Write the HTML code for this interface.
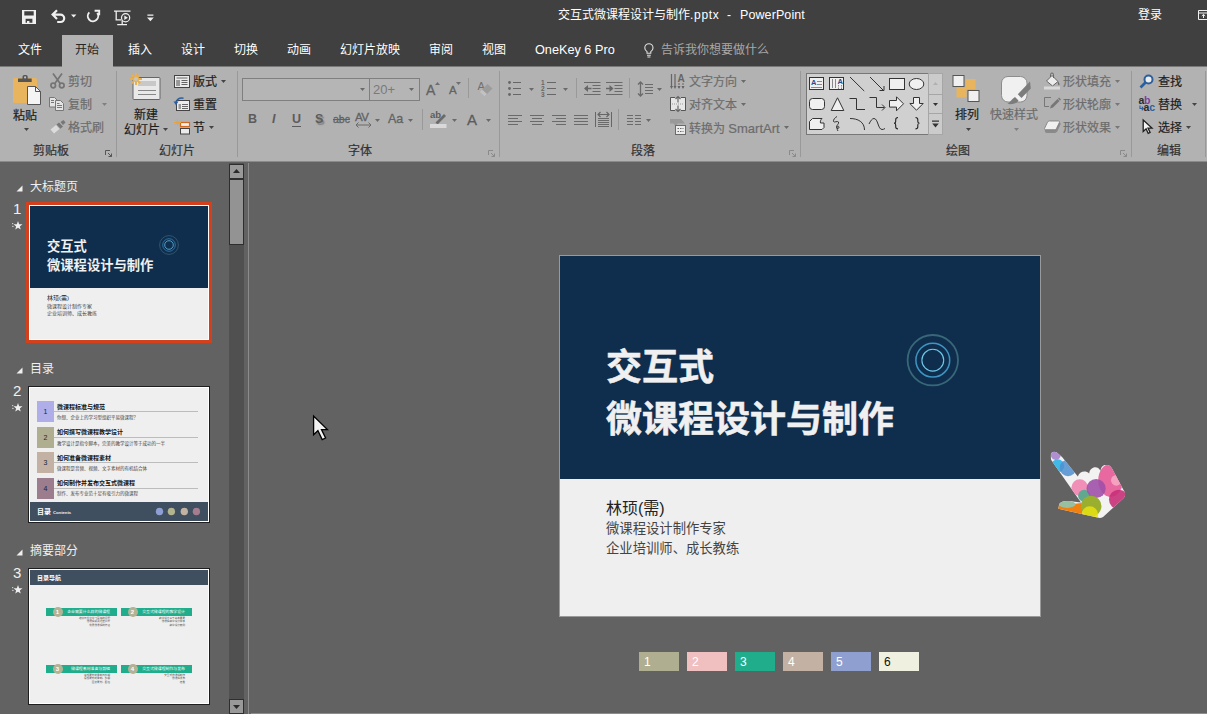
<!DOCTYPE html>
<html lang="zh-CN"><head><meta charset="utf-8"><title>交互式微课程设计与制作.pptx - PowerPoint</title>
<style>
*{box-sizing:border-box;margin:0;padding:0}
html,body{width:1207px;height:714px;overflow:hidden;background:#626262}
body{position:relative;font-family:"Liberation Sans","Noto Sans CJK SC",sans-serif;font-size:12px;color:#262626;line-height:1}
.a{position:absolute;white-space:nowrap}
#top{left:0;top:0;width:1207px;height:66px;background:#404040}
#ribbon{left:0;top:66px;width:1207px;height:95px;background:#b2b2b2}
#rshadow{left:0;top:161px;width:1207px;height:1px;background:#8a8a8a}
.tab{color:#fff;font-size:12px;top:44px}
.t{font-size:12px;color:#1e1e1e;-webkit-text-stroke:.2px}
.g{color:#6c6c6c}
.glabel{top:145px;color:#333}
.sep{width:1px;background:#999;top:71px;height:86px}
.sec{color:#f0f0f0;font-size:12px}
.num{color:#f0f0f0;font-size:15px}
.thumb{background:#efefef;border:1px solid #1e1e1e;box-shadow:inset 0 0 0 1px #fff}
svg{position:absolute;overflow:visible}
.nb{top:652px;width:40px;height:19px;color:#fff;font-size:12px;padding:4px 0 0 5px}
.sq{left:8px;width:17px;height:21px;font-size:7px;color:#223;text-align:center;line-height:21px}
.ln{left:25px;width:144px;height:1px;background:#bcbcbc}
.tt{left:28px;font-size:6px;font-weight:bold;color:#111}
.ts{left:28px;font-size:4.500px;color:#444}
.gb{width:71px;height:8px;background:#20ad8c}
.gc{width:10px;height:10px;border-radius:50%;background:#b3b295;color:#fff;font-size:6px;font-weight:bold;text-align:center;line-height:10px}
.gt{font-size:3.900px;color:#fff}
.gs{font-size:2.600px;color:#555;text-align:right;line-height:3.300px}
</style></head><body>
<div id="top" class="a"></div>
<div id="ribbon" class="a"></div>
<div id="rshadow" class="a"></div>
<div class="a" style="left:0;top:66px;width:1207px;height:1px;background:#797979"></div><div class="a" style="left:62px;top:66px;width:51px;height:1px;background:#b2b2b2"></div>
<!-- TITLEBAR -->
<svg style="left:22px;top:10px" width="14" height="14" viewBox="0 0 14 14"><path fill="#f0f0f0" fill-rule="evenodd" d="M0 0h14v14H0zM2.3 1.3v4.2h9.4V1.3zM3.6 8.8v4h6.8v-4zM5 11h2.4v1.8H5z"/></svg>
<svg style="left:50px;top:9px" width="28" height="15" viewBox="0 0 28 15"><path fill="none" stroke="#f0f0f0" stroke-width="2.200" stroke-linejoin="miter" d="M7 1.200 2.600 5.600 7 10M2.600 5.600H10.500a3.700 3.700 0 0 1 0 7.400H7.200"/><path fill="#f0f0f0" d="M21 5.5h5.4L23.7 8.6z"/></svg>
<svg style="left:86px;top:9px" width="15" height="15" viewBox="0 0 15 15"><path fill="none" stroke="#f0f0f0" stroke-width="1.900" d="M3.300 3.400A5.200 5.200 0 1 0 11.200 4M8.600 1.700H13.200V6.300"/></svg>
<svg style="left:114px;top:10px" width="18" height="17" viewBox="0 0 18 17"><path fill="none" stroke="#f0f0f0" stroke-width="1.3" d="M0 1.2h16.5M2.2 1.5v8.3H7M8.2 10v4.6M3.2 14.7h9.8"/><circle cx="11.6" cy="7.8" r="4.1" fill="#404040" stroke="#f0f0f0" stroke-width="1.2"/><path fill="#f0f0f0" d="M10.3 5.6l3.6 2.2-3.6 2.2z"/></svg>
<svg style="left:147px;top:14px" width="7" height="8" viewBox="0 0 7 8"><path fill="#f0f0f0" d="M0.4 0.6h6v1.2h-6zM0 3.4h6.8L3.4 7.2z"/></svg>
<div class="a" style="left:558px;top:9px;color:#fff;font-size:12px">交互式微课程设计与制作<span style="letter-spacing:.7px">.pptx</span></div>
<div class="a" style="left:727px;top:9px;color:#fff;font-size:12px">-</div>
<div class="a" style="left:740px;top:9px;color:#fff;font-size:12.5px;letter-spacing:.1px">PowerPoint</div>
<div class="a" style="left:1138px;top:9px;color:#fff;font-size:12px">登录</div>
<svg style="left:1198px;top:10px" width="9" height="10" viewBox="0 0 9 10"><path fill="none" stroke="#f0f0f0" stroke-width="1" d="M9 .5H.5v9H9M.5 3H9M5.5 8V4.5M3.8 6 5.5 4.4 7.2 6"/></svg>
<!-- TABS -->
<div class="a" style="left:62px;top:35px;width:51px;height:31px;background:#b2b2b2"></div>
<div class="a tab" style="left:18px">文件</div>
<div class="a tab" style="left:75px;color:#262626">开始</div>
<div class="a tab" style="left:128px">插入</div>
<div class="a tab" style="left:181px">设计</div>
<div class="a tab" style="left:234px">切换</div>
<div class="a tab" style="left:287px">动画</div>
<div class="a tab" style="left:340px">幻灯片放映</div>
<div class="a tab" style="left:429px">审阅</div>
<div class="a tab" style="left:482px">视图</div>
<div class="a tab" style="left:535px;font-size:12.700px">OneKey 6 Pro</div>
<svg style="left:644px;top:43px" width="10" height="15" viewBox="0 0 10 15"><path fill="none" stroke="#e0e0e0" stroke-width="1.1" d="M3 10.2V8.6C1.6 7.6.8 6.4.8 4.9a4.1 4.1 0 0 1 8.2 0c0 1.500-.8 2.700-2.200 3.700v1.600zM3 12.200h3.800M3.400 14h3"/></svg>
<div class="a tab" style="left:661px;color:#a8a8a8">告诉我你想要做什么</div>
<!-- clipboard -->
<svg style="left:13px;top:74px" width="29" height="32" viewBox="0 0 29 32"><rect x="0" y="4" width="24" height="25" rx="1.500" fill="#e8b45e"/><path fill="#555" d="M5 4.500h4.500V2.800a1.800 1.800 0 0 1 1.800-1.800h1.600a1.800 1.800 0 0 1 1.800 1.800V4.500h4v3.500H5z"/><circle cx="12.100" cy="3.400" r="1.100" fill="#c0c0c0"/><path fill="#f4f4f4" stroke="#555" stroke-width="1" d="M14.500 12.500h8l5 5v13h-13z"/><path fill="none" stroke="#555" stroke-width="1" d="M22.500 12.500v5h5"/></svg>
<div class="a t" style="left:13px;top:109.600px">粘贴</div>
<svg style="left:24px;top:128px" width="5" height="3"><path fill="#444" d="M0 0h5L2.500 3z"/></svg>
<svg style="left:50px;top:73px" width="15" height="16" viewBox="0 0 15 16"><path fill="none" stroke="#747474" stroke-width="1.700" d="M3 0.500 10.500 11M12 0.500 4.500 11"/><circle cx="3.200" cy="12.500" r="2.300" fill="none" stroke="#747474" stroke-width="1.700"/><circle cx="11.800" cy="12.500" r="2.300" fill="none" stroke="#747474" stroke-width="1.700"/></svg>
<div class="a t g" style="left:68px;top:76px">剪切</div>
<svg style="left:49px;top:97px" width="16" height="14" viewBox="0 0 16 14"><path fill="#e4e4e4" stroke="#777" stroke-width="1" d="M0.500 0.500h5l2.500 2.500v7h-7.500z"/><path fill="#e4e4e4" stroke="#777" stroke-width="1" d="M6.500 3.500h5l3 3v7h-8z"/><path stroke="#777" stroke-width="1" d="M2 3.500h3M2 5.500h3M8 8.500h5M8 10.500h5M8 6.500h2.500"/></svg>
<div class="a t g" style="left:68px;top:99px">复制</div>
<svg style="left:102px;top:103px" width="5" height="3"><path fill="#808080" d="M0 0h5L2.500 3z"/></svg>
<svg style="left:50px;top:120px" width="16" height="14" viewBox="0 0 16 14"><path fill="#dcdcdc" d="M0.500 9.500 6 5l3.500 4L4 13.500z"/><path fill="#777" d="M6.500 4.500 9 2.500l4 4-2.500 2.200z"/><path fill="#777" d="M10.500 2 13.500 0 15.500 2.500 13 5z"/></svg>
<div class="a t g" style="left:68px;top:122px">格式刷</div>
<div class="a t glabel" style="left:33px">剪贴板</div>
<svg class="lnch" style="left:105px;top:150px" width="7" height="7" viewBox="0 0 7 7"><path fill="none" stroke="#555" stroke-width="1" d="M0.500 5V0.500H5M3 3 6.500 6.500M6.500 3.500v3h-3"/></svg>
<div class="a sep" style="left:116px"></div>
<!-- slides -->
<svg style="left:129px;top:72px" width="32" height="29" viewBox="0 0 32 29"><rect x="4" y="5.500" width="27" height="22" rx="1" fill="#e9e9e9" stroke="#666" stroke-width="1"/><rect x="9" y="9" width="18" height="5" fill="#c8c8c8"/><path stroke="#888" stroke-width="1" d="M9 18.500h18M9 22.500h18"/><path stroke="#e8b04e" stroke-width="2" d="M7 1v12M1 7h12M2.800 2.800l8.400 8.400M11.200 2.800 2.800 11.200"/><circle cx="7" cy="7" r="2" fill="#c4c4c4"/></svg>
<div class="a t" style="left:134px;top:109px">新建</div>
<div class="a t" style="left:124px;top:124px">幻灯片</div>
<svg style="left:163px;top:128px" width="5" height="3"><path fill="#444" d="M0 0h5L2.500 3z"/></svg>
<svg style="left:174px;top:75px" width="16" height="13" viewBox="0 0 16 13"><rect x="0.500" y="0.500" width="15" height="12" fill="#ececec" stroke="#444" stroke-width="1"/><path stroke="#666" stroke-width="1" d="M2.500 3h11M3 5v6M7.500 5.500h6M7.500 7.500h6M7.500 9.500h6"/><rect x="2.500" y="5" width="3.500" height="6" fill="#999"/></svg>
<div class="a t" style="left:193px;top:76px">版式</div>
<svg style="left:221px;top:80px" width="5" height="3"><path fill="#444" d="M0 0h5L2.500 3z"/></svg>
<svg style="left:174px;top:96px" width="16" height="15" viewBox="0 0 16 15"><rect x="2.500" y="4.500" width="13" height="10" fill="#ececec" stroke="#444" stroke-width="1"/><path stroke="#666" stroke-width="1" d="M8 8.500h6M8 10.500h6M8 12.500h6"/><rect x="4.500" y="8" width="2.500" height="5" fill="#999"/><path fill="none" stroke="#2b5f9e" stroke-width="1.600" d="M2 7.500C2 3.500 5 1.500 9.500 2.200"/><path fill="#2b5f9e" d="M-0.500 5.500h5L2 9.200z"/></svg>
<div class="a t" style="left:193px;top:99px">重置</div>
<svg style="left:174px;top:119px" width="17" height="16" viewBox="0 0 17 16"><rect x="6.500" y="3.500" width="9" height="4" fill="#f0f0f0" stroke="#d2691e" stroke-width="1.200"/><rect x="6.500" y="9.500" width="9" height="5.500" fill="#ececec" stroke="#444" stroke-width="1"/><path stroke="#e8a33e" stroke-width="1" d="M3.500 0v7M0 3.500h7M1 1l5 5M6 1 1 6"/></svg>
<div class="a t" style="left:193px;top:122px">节</div>
<svg style="left:209px;top:126px" width="5" height="3"><path fill="#444" d="M0 0h5L2.500 3z"/></svg>
<div class="a t glabel" style="left:159px">幻灯片</div>
<div class="a sep" style="left:237px"></div>
<!-- font -->
<div class="a" style="left:242px;top:78px;width:128px;height:23px;border:1px solid #7f7f7f;background:#b5b5b5"></div>
<div class="a" style="left:369px;top:78px;width:51px;height:23px;border:1px solid #7f7f7f;background:#b5b5b5"></div>
<svg style="left:360px;top:88px" width="5" height="3"><path fill="#6a6a6a" d="M0 0h5L2.500 3z"/></svg>
<svg style="left:409px;top:88px" width="5" height="3"><path fill="#6a6a6a" d="M0 0h5L2.500 3z"/></svg>
<div class="a g" style="left:373px;top:83px;font-size:13px;color:#7a7a7a">20+</div>
<div class="a g" style="left:426px;top:83px;font-size:14px;color:#626262;-webkit-text-stroke:.3px">A</div>
<svg style="left:435px;top:82px" width="5" height="3"><path fill="#6e6e6e" d="M0 3h5L2.500 0z"/></svg>
<div class="a g" style="left:449px;top:85px;font-size:11.500px;color:#626262;-webkit-text-stroke:.3px">A</div>
<svg style="left:456px;top:82px" width="5" height="3"><path fill="#6e6e6e" d="M0 0h5L2.500 3z"/></svg>
<div class="a" style="left:468px;top:78px;width:1px;height:20px;background:#999"></div>
<svg style="left:477px;top:80px" width="16" height="17" viewBox="0 0 16 17"><text x="0.500" y="10" font-size="11" fill="#707070" font-family="Liberation Sans,sans-serif">A</text><path fill="#9c9c9c" d="M2.500 12 10.500 4 15.500 8.500 7.500 16.500z"/><path fill="#c2c2c2" d="M2.500 12 5 9.500l5 4.500-2.500 2.500z"/></svg>
<div class="a" style="left:248px;top:113px;font-size:12.500px;font-weight:bold;color:#5c5c5c">B</div>
<div class="a" style="left:272px;top:113px;font-size:12.500px;font-style:italic;font-weight:bold;color:#5c5c5c">I</div>
<div class="a" style="left:292px;top:113px;font-size:12.500px;color:#5c5c5c;font-weight:bold;border-bottom:1px solid #5c5c5c;padding-bottom:0px;height:14px">U</div>
<div class="a" style="left:315px;top:113px;font-size:12.500px;color:#5c5c5c;font-weight:bold;text-shadow:1.500px 1.500px 1.200px #808080">S</div>
<div class="a" style="left:333px;top:114px;font-size:10.500px;color:#626262;text-decoration:line-through;-webkit-text-stroke:.3px">abc</div>
<div class="a" style="left:355px;top:112px;font-size:11.500px;color:#626262;letter-spacing:-.5px;-webkit-text-stroke:.3px">AV</div>
<svg style="left:355px;top:122px" width="17" height="6" viewBox="0 0 17 6"><path fill="none" stroke="#6a6a6a" stroke-width="1" d="M1 3h15M3.500 0.500 1 3l2.500 2.500M13.500 0.500 16 3l-2.500 2.500"/></svg>
<svg style="left:375px;top:119px" width="5" height="3"><path fill="#6a6a6a" d="M0 0h5L2.500 3z"/></svg>
<div class="a" style="left:388px;top:113px;font-size:12.500px;color:#626262;-webkit-text-stroke:.3px">Aa</div>
<svg style="left:408px;top:119px" width="5" height="3"><path fill="#6a6a6a" d="M0 0h5L2.500 3z"/></svg>
<div class="a" style="left:422px;top:109px;width:1px;height:21px;background:#999"></div>
<div class="a" style="left:430px;top:110px;font-size:9.500px;font-weight:bold;color:#5c5c5c">ab</div>
<svg style="left:430px;top:112px" width="17" height="17" viewBox="0 0 17 17"><path stroke="#6a6a6a" stroke-width="2.800" d="M6.500 11.500 15 3"/><rect x="0" y="12" width="16.500" height="4" fill="#d9d9d9"/></svg>
<svg style="left:452px;top:119px" width="5" height="3"><path fill="#6a6a6a" d="M0 0h5L2.500 3z"/></svg>
<div class="a" style="left:467px;top:112px;font-size:15px;color:#5c5c5c;-webkit-text-stroke:.3px">A</div>
<svg style="left:486px;top:119px" width="5" height="3"><path fill="#6a6a6a" d="M0 0h5L2.500 3z"/></svg>
<div class="a t glabel" style="left:348px">字体</div>
<svg style="left:488px;top:150px" width="7" height="7" viewBox="0 0 7 7"><path fill="none" stroke="#8a8a8a" stroke-width="1" d="M0.500 5V0.500H5M3 3 6.500 6.500M6.500 3.500v3h-3"/></svg>
<div class="a sep" style="left:499px"></div>
<!-- paragraph -->
<svg style="left:508px;top:81px" width="14" height="15" viewBox="0 0 14 15"><g fill="#666"><circle cx="1.500" cy="1.500" r="1.400"/><circle cx="1.500" cy="7.500" r="1.400"/><circle cx="1.500" cy="13.500" r="1.400"/></g><path stroke="#666" stroke-width="1" d="M5 1.500h8M5 7.500h8M5 13.500h8"/></svg>
<svg style="left:529px;top:88px" width="5" height="3"><path fill="#6a6a6a" d="M0 0h5L2.500 3z"/></svg>
<svg style="left:541px;top:80px" width="16" height="17" viewBox="0 0 16 17"><g font-size="6.500" font-weight="bold" font-family="Liberation Sans,sans-serif" fill="#666"><text x="0" y="5">1</text><text x="0" y="11">2</text><text x="0" y="17">3</text></g><path stroke="#666" stroke-width="1" d="M6 2.500h9M6 8.500h9M6 14.500h9"/></svg>
<svg style="left:563px;top:88px" width="5" height="3"><path fill="#6a6a6a" d="M0 0h5L2.500 3z"/></svg>
<div class="a" style="left:576px;top:78px;width:1px;height:20px;background:#999"></div>
<svg style="left:584px;top:82px" width="17" height="14" viewBox="0 0 17 14"><path stroke="#6a6a6a" stroke-width="1" d="M0 0.500h16.500M8.500 3.500h8M8.500 6.500h8M8.500 9.500h8M0 12.500h16.500"/><path fill="none" stroke="#666" stroke-width="1.500" d="M1 6.500h6.500"/><path fill="#666" d="M0 6.500 4 3v7z"/></svg>
<svg style="left:606px;top:82px" width="17" height="14" viewBox="0 0 17 14"><path stroke="#6a6a6a" stroke-width="1" d="M0 0.500h16.500M8.500 3.500h8M8.500 6.500h8M8.500 9.500h8M0 12.500h16.500"/><path fill="none" stroke="#666" stroke-width="1.500" d="M0 6.500h6"/><path fill="#666" d="M7.500 6.500 3.500 3v7z"/></svg>
<div class="a" style="left:629px;top:78px;width:1px;height:20px;background:#999"></div>
<svg style="left:638px;top:81px" width="15" height="16" viewBox="0 0 15 16"><path stroke="#6a6a6a" stroke-width="1" d="M7 3.500h8M7 6.500h8M7 9.500h8M7 12.500h8"/><path fill="none" stroke="#6a6a6a" stroke-width="1.300" d="M2.500 1v14M0 3.500 2.500 1 5 3.500M0 12.500 2.500 15 5 12.500"/></svg>
<svg style="left:657px;top:88px" width="5" height="3"><path fill="#6a6a6a" d="M0 0h5L2.500 3z"/></svg>
<svg style="left:508px;top:115px" width="14" height="11" viewBox="0 0 14 11"><path stroke="#6a6a6a" stroke-width="1" d="M0 0.500h14M0 3.500h10M0 6.500h14M0 9.500h10"/></svg>
<svg style="left:530px;top:115px" width="14" height="11" viewBox="0 0 14 11"><path stroke="#6a6a6a" stroke-width="1" d="M0 0.500h14M2 3.500h10M0 6.500h14M2 9.500h10"/></svg>
<svg style="left:552px;top:115px" width="14" height="11" viewBox="0 0 14 11"><path stroke="#6a6a6a" stroke-width="1" d="M0 0.500h14M4 3.500h10M0 6.500h14M4 9.500h10"/></svg>
<svg style="left:574px;top:115px" width="14" height="11" viewBox="0 0 14 11"><path stroke="#6a6a6a" stroke-width="1" d="M0 0.500h14M0 3.500h14M0 6.500h14M0 9.500h14"/></svg>
<svg style="left:595px;top:111px" width="17" height="17" viewBox="0 0 17 17"><path stroke="#666" stroke-width="1" d="M0.500 1v15M16.500 1v15"/><path stroke="#6a6a6a" stroke-width="1" d="M3 7.500h11M3 9.500h11M3 11.500h11M3 13.500h11M3 15.500h11"/><path fill="none" stroke="#666" stroke-width="1.200" d="M3 3.500h11M5.500 1 3 3.500 5.500 6M11.500 1 14 3.500 11.500 6"/></svg>
<div class="a" style="left:618px;top:109px;width:1px;height:21px;background:#999"></div>
<svg style="left:627px;top:115px" width="14" height="11" viewBox="0 0 14 11"><path stroke="#6a6a6a" stroke-width="1" d="M0 0.500h6M8 0.500h6M0 3.500h6M8 3.500h6M0 6.500h6M8 6.500h6M0 9.500h6M8 9.500h6"/></svg>
<svg style="left:646px;top:119px" width="5" height="3"><path fill="#6a6a6a" d="M0 0h5L2.500 3z"/></svg>
<svg style="left:670px;top:73px" width="16" height="16" viewBox="0 0 16 16"><path stroke="#666" stroke-width="1.200" d="M1.500 1v13M5 1v13"/><path stroke="#666" stroke-width="1" stroke-dasharray="2 1.500" d="M9 10v5M13 10v5"/><path fill="#666" d="M0 13h3L1.500 16zM3.500 13h3L5 16zM7.500 13h3L9 16zM11.500 13h3L13 16z"/><text x="7.500" y="8.500" font-size="10" font-weight="bold" fill="#666" font-family="Liberation Sans,sans-serif">A</text></svg>
<div class="a t g" style="left:689px;top:76px">文字方向</div>
<svg style="left:741px;top:80px" width="5" height="3"><path fill="#6a6a6a" d="M0 0h5L2.500 3z"/></svg>
<svg style="left:670px;top:96px" width="16" height="16" viewBox="0 0 16 16"><path fill="none" stroke="#555" stroke-width="1" d="M5 1.500H0.500v13H5M11 1.500h4.500v13H11"/><rect x="1" y="2" width="14" height="12" fill="#e6e6e6"/><path stroke="#999" stroke-width="1" stroke-dasharray="1 1" d="M2 8h12"/><path fill="none" stroke="#666" stroke-width="1.200" d="M8 0.500v6M8 9.500v6M5.500 3 8 0.500 10.500 3M5.500 13 8 15.500 10.500 13"/></svg>
<div class="a t g" style="left:689px;top:99px">对齐文本</div>
<svg style="left:741px;top:103px" width="5" height="3"><path fill="#6a6a6a" d="M0 0h5L2.500 3z"/></svg>
<svg style="left:670px;top:119px" width="16" height="16" viewBox="0 0 16 16"><path fill="#999" d="M0 0h11l4 4.500H7.500L6 7.500 3.500 4.500H0z"/><rect x="5.500" y="6.500" width="10" height="9" fill="#ececec" stroke="#6a6a6a" stroke-width="1"/><path stroke="#6a6a6a" stroke-width="1" stroke-dasharray="1.500 1" d="M7.500 9.500h6M7.500 12.500h6"/></svg>
<div class="a t g" style="left:689px;top:122px">转换为 <span style="font-size:13px">SmartArt</span></div>
<svg style="left:784px;top:126px" width="5" height="3"><path fill="#6a6a6a" d="M0 0h5L2.500 3z"/></svg>
<div class="a t glabel" style="left:631px">段落</div>
<svg style="left:789px;top:150px" width="7" height="7" viewBox="0 0 7 7"><path fill="none" stroke="#8a8a8a" stroke-width="1" d="M0.500 5V0.500H5M3 3 6.500 6.500M6.500 3.500v3h-3"/></svg>
<div class="a sep" style="left:800px"></div>
<!-- drawing -->
<div class="a" style="left:806px;top:73px;width:137px;height:62px;border:1px solid #777;background:#d0d0d0"></div>
<div class="a" style="left:928px;top:73px;width:15px;height:22px;border:1px solid #a6a6a6;background:#cbcbcb"></div>
<div class="a" style="left:928px;top:94px;width:15px;height:20px;border:1px solid #a6a6a6;background:#cbcbcb"></div>
<div class="a" style="left:928px;top:113px;width:15px;height:22px;border:1px solid #a6a6a6;background:#cbcbcb"></div>
<svg style="left:933px;top:82px" width="5" height="3"><path fill="#b0b0b0" d="M0 3h5L2.500 0z"/></svg>
<svg style="left:933px;top:103px" width="5" height="3"><path fill="#333" d="M0 0h5L2.500 3z"/></svg>
<svg style="left:932px;top:120px" width="7" height="8" viewBox="0 0 7 8"><path fill="#333" d="M0 0.500h7v1.200H0zM0.200 3.500h6.600L3.500 7.500z"/></svg>
<svg style="left:806px;top:73px" width="122" height="62" viewBox="806 73 122 62">
<g fill="#f0f0f0" stroke="#333" stroke-width="1">
<rect x="809.500" y="77.500" width="14" height="12"/>
<rect x="829.500" y="77.500" width="14" height="12"/>
<rect x="889.500" y="78.500" width="15" height="11"/>
<ellipse cx="916.500" cy="84" rx="7.300" ry="5.500"/>
<rect x="809.500" y="98.500" width="15" height="11" rx="3"/>
<path d="M837.500 97.800 843.800 110.500h-12.600z"/>
<path d="M889.500 100.500h7v-3.700l7 7-7 7v-3.700h-7z"/>
<path d="M913.500 97.500h6v6h3.700l-6.700 6.700-6.700-6.700h3.700z"/>
<path d="M809.500 129.500v-8l3-3h9.500c-1.500 1.500-2 3 -1.500 4.500h3.500v4.500l-2 2z"/>
</g>
<g fill="none" stroke="#333" stroke-width="1">
<path d="M850 77 864.200 91"/>
<path d="M870 77 884 91M879.500 90.500h4.500V86"/>
<path d="M849.500 98.500h7v11h8.500"/>
<path d="M869.500 97.500h7v10h8M882 104.500l3 3-3 3"/>
<path d="M837 116.500c-2 1-4 3.500-3.500 5 .5 1.500 4-1 5 .5 1 1.500-2.500 3.500-2 5.500.4 1.600 2.600 1.200 2.500-.3-.1-1.500-2.200-1-2 1 .1 1 .5 2 1 2.800"/>
<path d="M850 118.500c8 0 14.500 3.500 14.500 11.500"/>
<path d="M869 124c1.500-3 3-5.500 5-5.500 4 0 4 11 8 11 1 0 2-.3 3-1"/>
</g>
<path fill="none" stroke="#222" stroke-width="1.100" d="M898 117.500c-1.800 0-2.300.7-2.300 2.200v1.800c0 1.200-.5 1.700-1.700 1.700 1.200 0 1.700.5 1.700 1.700v1.800c0 1.500.5 2.200 2.300 2.200M915.500 117.500c1.800 0 2.300.7 2.300 2.200v1.800c0 1.200.5 1.700 1.700 1.700-1.200 0-1.700.5-1.700 1.700v1.800c0 1.500-.5 2.200-2.300 2.200"/>
<g stroke="#8a8a8a" stroke-width="1"><path d="M817 81.500h5M817 84.500h5M811 87.500h11"/><path d="M832.500 79v9M835.500 79v9"/><path stroke-dasharray="1.500 1" d="M838.500 85v4M841.500 85v4"/></g>
<text x="811" y="84.500" font-size="7.500" font-weight="bold" fill="#1f4e8f" font-family="Liberation Sans,sans-serif">A</text>
<text x="837.500" y="84" font-size="7.500" font-weight="bold" fill="#1f4e8f" font-family="Liberation Sans,sans-serif">A</text>


</svg>
<svg style="left:952px;top:75px" width="29" height="28" viewBox="0 0 29 28"><rect x="13.500" y="4" width="10" height="10" fill="#e8b45e"/><rect x="4.500" y="12.500" width="10" height="10" fill="#e8b45e"/><rect x="1" y="0.500" width="11" height="11" fill="#f0f0f0" stroke="#555" stroke-width="1"/><rect x="16" y="15.500" width="11" height="11" fill="#f0f0f0" stroke="#555" stroke-width="1"/></svg>
<div class="a t" style="left:955px;top:109px">排列</div>
<svg style="left:966px;top:128px" width="5" height="3"><path fill="#444" d="M0 0h5L2.500 3z"/></svg>
<svg style="left:1000px;top:75px" width="32" height="31" viewBox="0 0 32 31"><rect x="1.500" y="1.500" width="25.500" height="25.500" rx="6.500" fill="#f0f0f0" stroke="#8c8c8c" stroke-width="1"/><path fill="#7c7c7c" d="M30 6.500 30.800 13.500 21.500 23 17.800 19.300z"/><path fill="#f4f4f4" d="M17 20 20.800 23.800 19.500 25 15.800 21.200z"/><path fill="#7c7c7c" d="M15 22 18.500 25.500C16.500 29 11.500 29.500 7.500 29 10.500 27 11.500 24 15 22z"/></svg>
<div class="a t g" style="left:990px;top:109px">快速样式</div>
<svg style="left:1014px;top:128px" width="5" height="3"><path fill="#808080" d="M0 0h5L2.500 3z"/></svg>
<svg style="left:1044px;top:73px" width="17" height="17" viewBox="0 0 17 17"><path fill="#ececec" stroke="#666" stroke-width="1" d="M2.500 8 8 2.500 14 8.500 8.500 13z"/><path fill="none" stroke="#666" stroke-width="1" d="M6.500 4V1.500a1.500 1.500 0 0 1 3 0V5"/><path fill="#666" d="M14 8.500c1.500 2 2 3 1 4-1-1-1.500-2.500-1-4z"/><rect x="0" y="13.500" width="16" height="3" fill="#d9d9d9"/></svg>
<div class="a t g" style="left:1063px;top:76px">形状填充</div>
<svg style="left:1115px;top:80px" width="5" height="3"><path fill="#777" d="M0 0h5L2.500 3z"/></svg>
<svg style="left:1044px;top:96px" width="17" height="15" viewBox="0 0 17 15"><path fill="none" stroke="#777" stroke-width="1" d="M7 1.500H0.500v9H5"/><path fill="#777" d="M6 12.500 7 9.500 13.500 3l2 2L9 11.500z"/><path fill="#777" d="M14 2.500 15 1.500l2 2-1 1z"/></svg>
<div class="a t g" style="left:1063px;top:99px">形状轮廓</div>
<svg style="left:1115px;top:103px" width="5" height="3"><path fill="#777" d="M0 0h5L2.500 3z"/></svg>
<svg style="left:1044px;top:120px" width="17" height="14" viewBox="0 0 17 14"><path fill="#8a8a8a" d="M3 5.500 6 2.500h9.500c1 0 1.500 1 1 2L14 10c-.5 1.500-1.500 3-3.500 3H3c-2 0-2.500-2-2-3.500z"/><path fill="#f0f0f0" stroke="#777" stroke-width=".8" d="M5.500 1h9c1 0 1.200.8.800 1.600L12.500 8.500c-.4.800-1 1.200-2 1.200h-9c-1 0-1.200-.8-.8-1.600L3.500 2.200C3.900 1.400 4.500 1 5.500 1z"/></svg>
<div class="a t g" style="left:1063px;top:122px">形状效果</div>
<svg style="left:1115px;top:126px" width="5" height="3"><path fill="#777" d="M0 0h5L2.500 3z"/></svg>
<div class="a t glabel" style="left:946px">绘图</div>
<svg style="left:1120px;top:150px" width="7" height="7" viewBox="0 0 7 7"><path fill="none" stroke="#8a8a8a" stroke-width="1" d="M0.500 5V0.500H5M3 3 6.500 6.500M6.500 3.500v3h-3"/></svg>
<div class="a sep" style="left:1131px"></div>
<!-- editing -->
<svg style="left:1139px;top:74px" width="15" height="14" viewBox="0 0 15 14"><circle cx="9.500" cy="5.500" r="4" fill="#ececec" stroke="#2b5f9e" stroke-width="2"/><path stroke="#2b5f9e" stroke-width="2.600" d="M6.500 8.500 1.500 13.500"/></svg>
<div class="a t" style="left:1158px;top:76px">查找</div>
<svg style="left:1139px;top:96px" width="17" height="16" viewBox="0 0 17 16"><g font-family="Liberation Sans,sans-serif" font-size="10.500" font-weight="bold"><text x="-0.500" y="7.500" fill="#2a2a2a">a</text><text x="5" y="7.500" fill="#7b3f9e">b</text><text x="4.500" y="15" fill="#2a2a2a">a</text><text x="10.300" y="15" fill="#2b5f9e">c</text></g><path fill="none" stroke="#2b5f9e" stroke-width="1.100" d="M1 9.500v3h3M2.800 10.700 4.300 12.500 2.800 14.300"/></svg>
<div class="a t" style="left:1158px;top:99px">替换</div>
<svg style="left:1192px;top:103px" width="5" height="3"><path fill="#444" d="M0 0h5L2.500 3z"/></svg>
<svg style="left:1142px;top:119px" width="11" height="15" viewBox="0 0 11 15"><path fill="#f4f4f4" stroke="#1e1e1e" stroke-width="1.300" stroke-linejoin="miter" d="M1.200 1v11.500l2.900-2.700 2.100 4.600 1.900-.9-2.100-4.400h4z"/></svg>
<div class="a t" style="left:1158px;top:122px">选择</div>
<svg style="left:1186px;top:126px" width="5" height="3"><path fill="#444" d="M0 0h5L2.500 3z"/></svg>
<div class="a t glabel" style="left:1157px">编辑</div>
<div class="a sep" style="left:1205px"></div>
<!-- left panel -->
<div class="a" style="left:229px;top:163px;width:15px;height:551px;background:#505050"></div>
<div class="a" style="left:248px;top:163px;width:1px;height:551px;background:#8c8c8c"></div>
<div class="a" style="left:229px;top:164px;width:15px;height:15px;background:#999;border:1px solid #2e2e2e"></div>
<svg style="left:233px;top:169px" width="7" height="4"><path fill="#2a2a2a" d="M0 4h7L3.500 0z"/></svg>
<div class="a" style="left:229px;top:179px;width:15px;height:66px;background:#939393;border:1px solid #2e2e2e"></div>
<div class="a" style="left:229px;top:699px;width:15px;height:15px;background:#999;border:1px solid #2e2e2e"></div>
<svg style="left:233px;top:705px" width="7" height="4"><path fill="#2a2a2a" d="M0 0h7L3.500 4z"/></svg>
<!-- section 1 -->
<svg style="left:15.500px;top:184.500px" width="7" height="7"><path fill="#f0f0f0" d="M6.500 0.500v6h-6z"/></svg>
<div class="a sec" style="left:30px;top:181px">大标题页</div>
<div class="a num" style="left:13px;top:201px">1</div>
<svg class="star" style="left:12px;top:220.500px" width="10" height="9" viewBox="0 0 10 9"><path fill="#f0f0f0" d="M6.00 0.10 7.15 3.22 10.47 3.35 7.85 5.40 8.76 8.60 6.00 6.75 3.24 8.60 4.15 5.40 1.53 3.35 4.85 3.22z"/><circle cx="0.700" cy="2.600" r=".650" fill="#e8e8e8"/><circle cx="0.900" cy="5.400" r=".650" fill="#e8e8e8"/></svg>
<div class="a" style="left:26px;top:202px;width:186px;height:141px;background:#d4401c"></div>
<div class="a" style="left:29px;top:205px;width:180px;height:135px;background:#fff"></div>
<div class="a" style="left:30px;top:206px;width:178px;height:133px;background:#efefef;overflow:hidden">
<div style="position:absolute;left:0;top:0;width:178px;height:82px;background:#0f2e4e"></div>
<div class="a" style="left:17px;top:31px;font-size:13.300px;font-weight:bold;color:#f0f0f0;line-height:19px">交互式<br>微课程设计与制作</div>
<svg style="left:128px;top:28px" width="22" height="22" viewBox="-11 -11 22 22"><circle r="9.400" fill="none" stroke="#3d6475" stroke-width=".7"/><circle r="6.300" fill="none" stroke="#3a8fc8" stroke-width=".7"/><circle r="4.300" fill="none" stroke="#6fcdf0" stroke-width=".7"/></svg>
<div class="a" style="left:17px;top:89px;font-size:6px;color:#222">林顼(需)</div>
<div class="a" style="left:17px;top:97.500px;font-size:5px;color:#444">微课程设计制作专家</div>
<div class="a" style="left:17px;top:105px;font-size:5px;color:#444">企业培训师、成长教练</div>
</div>
<!-- section 2 -->
<svg style="left:15.500px;top:366.500px" width="7" height="7"><path fill="#f0f0f0" d="M6.500 0.500v6h-6z"/></svg>
<div class="a sec" style="left:30px;top:363px">目录</div>
<div class="a num" style="left:13px;top:383px">2</div>
<svg class="star" style="left:12px;top:402.500px" width="10" height="9" viewBox="0 0 10 9"><path fill="#f0f0f0" d="M6.00 0.10 7.15 3.22 10.47 3.35 7.85 5.40 8.76 8.60 6.00 6.75 3.24 8.60 4.15 5.40 1.53 3.35 4.85 3.22z"/><circle cx="0.700" cy="2.600" r=".650" fill="#e8e8e8"/><circle cx="0.900" cy="5.400" r=".650" fill="#e8e8e8"/></svg>
<div class="a thumb" style="left:28px;top:386px;width:182px;height:137px;overflow:hidden">
<div class="a sq" style="top:14px;background:#b0aee8">1</div>
<div class="a sq" style="top:40px;background:#afae90">2</div>
<div class="a sq" style="top:65px;background:#c3b2a3">3</div>
<div class="a sq" style="top:91px;background:#9b7d8d">4</div>
<div class="a ln" style="top:24px"></div><div class="a ln" style="top:50px"></div><div class="a ln" style="top:75px"></div><div class="a ln" style="top:101px"></div>
<div class="a tt" style="top:17px">微课程标准与规范</div>
<div class="a tt" style="top:42px">如何撰写微课程教学设计</div>
<div class="a tt" style="top:68px">如何准备微课程素材</div>
<div class="a tt" style="top:93px">如何制作并发布交互式微课程</div>
<div class="a ts" style="top:29px">你想、企业上的学习型组织平易微课程？</div>
<div class="a ts" style="top:55px">教学设计是指令脚本，完美的教学设计等于成功的一半</div>
<div class="a ts" style="top:80px">微课程是音频、视频、文字素材的有机结合体</div>
<div class="a ts" style="top:105px">制作、发布专业范十足有吸引力的微课程</div>
<div class="a" style="left:1px;top:115px;width:178px;height:19px;background:#3f4f5f"></div>
<div class="a" style="left:8px;top:121px;font-size:7px;font-weight:bold;color:#fff">目录</div>
<div class="a" style="left:24px;top:124px;font-size:4.200px;font-weight:bold;color:#f0f0f0">Contents</div>
<svg style="left:126px;top:120px" width="48" height="10" viewBox="0 0 48 10"><circle cx="4.500" cy="4.500" r="3.700" fill="#8f9fd4"/><circle cx="16.400" cy="4.500" r="3.700" fill="#b3b38f"/><circle cx="29.300" cy="4.500" r="3.700" fill="#c3b2a3"/><circle cx="41.400" cy="4.500" r="3.700" fill="#a57d8e"/></svg>
</div>
<!-- section 3 -->
<svg style="left:15.500px;top:548.500px" width="7" height="7"><path fill="#f0f0f0" d="M6.500 0.500v6h-6z"/></svg>
<div class="a sec" style="left:30px;top:545px">摘要部分</div>
<div class="a num" style="left:13px;top:565px">3</div>
<svg class="star" style="left:12px;top:584.500px" width="10" height="9" viewBox="0 0 10 9"><path fill="#f0f0f0" d="M6.00 0.10 7.15 3.22 10.47 3.35 7.85 5.40 8.76 8.60 6.00 6.75 3.24 8.60 4.15 5.40 1.53 3.35 4.85 3.22z"/><circle cx="0.700" cy="2.600" r=".650" fill="#e8e8e8"/><circle cx="0.900" cy="5.400" r=".650" fill="#e8e8e8"/></svg>
<div class="a thumb" style="left:28px;top:568px;width:182px;height:137px;overflow:hidden">
<div class="a" style="left:1px;top:1px;width:178px;height:15px;background:#3f4f5f"></div>
<div class="a" style="left:8px;top:6px;font-size:6px;font-weight:bold;color:#fff">目录导航</div>
<div class="a gb" style="left:17px;top:39px"></div><div class="a gb" style="left:92px;top:39px"></div>
<div class="a gb" style="left:17px;top:96px"></div><div class="a gb" style="left:92px;top:96px"></div>
<div class="a gc" style="left:23.500px;top:38px">1</div><div class="a gc" style="left:98.500px;top:38px">2</div>
<div class="a gc" style="left:23.500px;top:95px">3</div><div class="a gc" style="left:98.500px;top:95px">4</div>
<div class="a gt" style="right:99px;top:40.500px">企业需要什么样的微课程</div>
<div class="a gt" style="right:24px;top:40.500px">交互式微课程的教学设计</div>
<div class="a gt" style="right:99px;top:97.500px">微课程素材准备与剪辑</div>
<div class="a gt" style="right:24px;top:97.500px">交互式微课程制作与发布</div>
<div class="a gs" style="right:99px;top:48px">培训与企业学习面临的问题<br>微课程解决这些问题<br>优质微课程的特征</div>
<div class="a gs" style="right:24px;top:48px">教学设计三个基本要素<br>微课程教学设计脚本<br>教学设计案例</div>
<div class="a gs" style="right:99px;top:105px">音频素材的录制与剪辑<br>视频素材的录制、剪辑<br>图文素材、配色</div>
<div class="a gs" style="right:24px;top:105px">交互式微课程制作<br>微课程发布<br>传播</div>
</div>
<div class="a" style="left:251px;top:713px;width:956px;height:1px;background:#8c8c8c"></div>
<!-- main slide -->
<div class="a" style="left:559px;top:255px;width:482px;height:362px;border:1px solid #9a9a9a;background:#efefef"></div>
<div class="a" style="left:560px;top:256px;width:480px;height:223px;background:#0f2e4e"></div>
<div class="a" style="left:606px;top:342px;font-size:36px;font-weight:bold;color:#f0f0f0;line-height:52px;-webkit-text-stroke:.55px #f0f0f0">交互式<br>微课程设计与制作</div>
<svg style="left:906px;top:333px" width="54" height="54" viewBox="-26.800 -27.200 54 54"><circle r="25.200" fill="none" stroke="#386878" stroke-width="1.800"/><circle r="16.900" fill="none" stroke="#3d95c0" stroke-width="1.500"/><circle r="10.900" fill="none" stroke="#70c8e8" stroke-width="1.100"/></svg>
<div class="a" style="left:606px;top:500.500px;font-size:16px;color:#222">林顼(需)</div>
<div class="a" style="left:606px;top:522px;font-size:13.330px;color:#444">微课程设计制作专家</div>
<div class="a" style="left:606px;top:542px;font-size:13.330px;color:#444">企业培训师、成长教练</div>
<svg style="left:1040px;top:440px" width="100" height="90" viewBox="0 0 793 714"><defs><clipPath id="hand"><path d="M85 125C80 100 105 85 130 97L175 135 300 290C310 250 360 235 390 265 395 215 455 195 480 245 485 205 510 195 530 200 545 195 560 210 570 225L670 410C680 430 675 450 660 465L500 610C485 620 470 620 455 615L145 545 150 520C150 490 200 480 260 487L325 495 90 160C85 150 83 135 85 125Z"/></clipPath></defs>
<g clip-path="url(#hand)"><rect width="793" height="714" fill="#f2f2f2"/>
<circle cx="125" cy="118" r="40" fill="#b08fd0"/>
<circle cx="140" cy="205" r="52" fill="#40b8e8"/>
<circle cx="222" cy="222" r="66" fill="#4f8fd0" fill-opacity=".85"/>
<circle cx="315" cy="378" r="66" fill="#f090b8"/>
<circle cx="350" cy="442" r="48" fill="#60a890"/>
<ellipse cx="560" cy="320" rx="98" ry="132" fill="#e868a0"/>
<circle cx="605" cy="320" r="42" fill="#f8b0c8" fill-opacity=".8"/>
<circle cx="445" cy="385" r="76" fill="#a050a8" fill-opacity=".9"/>
<circle cx="625" cy="472" r="78" fill="#c83078" fill-opacity=".9"/>
<path d="M140 520 330 500 340 600 140 560z" fill="#f08010"/>
<circle cx="405" cy="525" r="82" fill="#9aae30"/>
<circle cx="395" cy="592" r="66" fill="#e8e010" fill-opacity=".85"/>
<ellipse cx="215" cy="510" rx="66" ry="29" fill="#98c0a0"/>
</g></svg>
<!-- nav buttons -->
<div class="a nb" style="left:639px;background:#afae90">1</div>
<div class="a nb" style="left:687px;background:#f0c0c0">2</div>
<div class="a nb" style="left:735px;background:#20ad8c">3</div>
<div class="a nb" style="left:783px;background:#c3b2a3">4</div>
<div class="a nb" style="left:831px;background:#8f9fd0">5</div>
<div class="a nb" style="left:879px;background:#f0f0e0;color:#111">6</div>
<!-- mouse cursor -->
<svg style="left:0;top:0" width="1207" height="714" viewBox="0 0 1207 714"><path fill="#f2f2f2" stroke="#000" stroke-width="1.300" stroke-linejoin="miter" d="M313.600 416V434.800L317.900 430.700 322.200 439.600 325.600 438 321.500 429.600H327.400Z"/></svg>
</body></html>
